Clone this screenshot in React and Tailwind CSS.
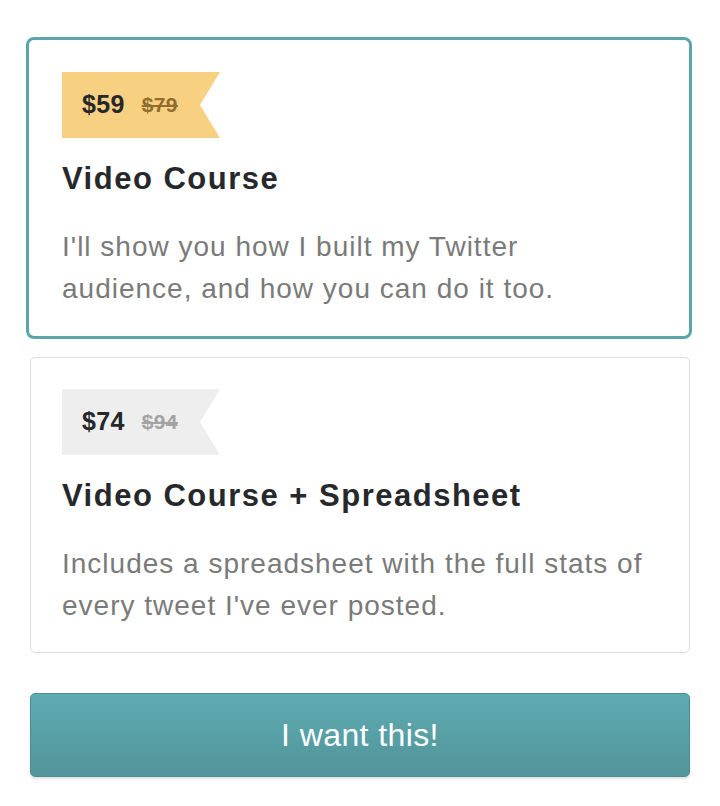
import React, { useState } from 'react';

const options = [
  {
    id: 1,
    price: '$59',
    oldPrice: '$79',
    title: 'Video Course',
    desc: "I'll show you how I built my Twitter audience, and how you can do it too.",
  },
  {
    id: 2,
    price: '$74',
    oldPrice: '$94',
    title: 'Video Course + Spreadsheet',
    desc: "Includes a spreadsheet with the full stats of every tweet I've ever posted.",
  },
];

const Ribbon = ({ price, oldPrice, active }) => (
  <div
    className={`w-[158px] h-[66px] flex items-center pl-[20px] gap-[17px] [clip-path:polygon(0_0,100%_0,calc(100%-20px)_50%,100%_100%,0_100%)] ${
      active ? 'bg-[#f7d181]' : 'bg-[#eeeeee]'
    }`}
  >
    <span className="text-[25px] font-bold text-[#25272b] tracking-[0.3px]">{price}</span>
    <span
      className={`text-[21px] font-bold line-through tracking-[0.4px] ${
        active ? 'text-[#8f6d2d]' : 'text-[#a3a3a3]'
      }`}
    >
      {oldPrice}
    </span>
  </div>
);

const App = () => {
  const [selected, setSelected] = useState(1);

  return (
    <div className="w-[720px] h-[806px] bg-white px-[30px] pt-[37px] font-['Liberation_Sans',Arial,sans-serif] antialiased">
      <div className="flex flex-col gap-[18px]">
        {options.map((opt) => {
          const active = selected === opt.id;
          return (
            <div
              key={opt.id}
              onClick={() => setSelected(opt.id)}
              className={
                active
                  ? 'cursor-pointer ml-[-4px] mr-[-2px] border-[3px] border-[#5aa6ab] rounded-[8px] pt-[32px] pl-[33px] pr-[40px] pb-[26px]'
                  : 'cursor-pointer border border-[#dddddd] rounded-[5px] pt-[31px] pl-[31px] pr-[40px] pb-[25px]'
              }
            >
              <Ribbon price={opt.price} oldPrice={opt.oldPrice} active={active} />
              <h2 className="mt-[23px] text-[31px] leading-[36px] font-bold text-[#26282c] tracking-[1.5px]">
                {opt.title}
              </h2>
              <p className="mt-[29px] text-[28px] leading-[42px] text-[#7a7a7a] tracking-[1px]">
                {opt.desc}
              </p>
            </div>
          );
        })}
      </div>

      <button className="mt-[40px] w-full h-[84px] rounded-[5px] border border-[#4b8d92] bg-gradient-to-b from-[#5eabb1] to-[#51959a] shadow-[0_2px_3px_rgba(0,0,0,0.12)] text-white text-[32px] tracking-[0.4px] flex items-center justify-center">
        I want this!
      </button>
    </div>
  );
};

export default App;
